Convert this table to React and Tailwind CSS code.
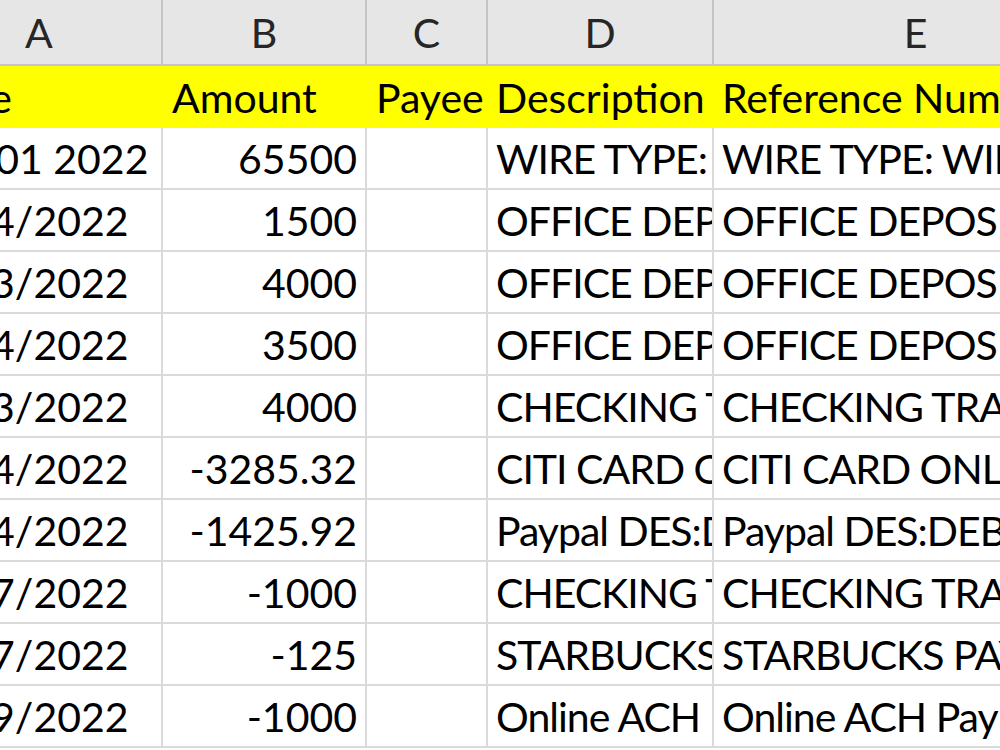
import React from "react";

const COLS = ["A", "B", "C", "D", "E"];

const ROWS = [
  { date: "Jan 01 2022", amount: "65500", desc: "WIRE TYPE: WIRE IN", ref: "WIRE TYPE: WIRE IN DATE: 220101" },
  { date: "1/14/2022", amount: "1500", desc: "OFFICE DEPOSIT", ref: "OFFICE DEPOSIT" },
  { date: "1/13/2022", amount: "4000", desc: "OFFICE DEPOSIT", ref: "OFFICE DEPOSIT" },
  { date: "1/14/2022", amount: "3500", desc: "OFFICE DEPOSIT", ref: "OFFICE DEPOSIT" },
  { date: "1/23/2022", amount: "4000", desc: "CHECKING TRANSFER", ref: "CHECKING TRANSFER" },
  { date: "1/24/2022", amount: "-3285.32", desc: "CITI CARD ONLINE", ref: "CITI CARD ONLINE PAYMENT" },
  { date: "1/24/2022", amount: "-1425.92", desc: "Paypal DES:DEBIT", ref: "Paypal DES:DEBIT" },
  { date: "1/27/2022", amount: "-1000", desc: "CHECKING TRANSFER", ref: "CHECKING TRANSFER" },
  { date: "1/27/2022", amount: "-125", desc: "STARBUCKS PAYMENT", ref: "STARBUCKS PAYMENT" },
  { date: "1/29/2022", amount: "-1000", desc: "Online ACH Payment", ref: "Online ACH Payment" },
];

function Cell({ children, right, last, tight }) {
  return (
    <div
      className={
        "h-[62px] flex items-center overflow-hidden whitespace-nowrap border-b-2 border-[#dadada] " +
        (last ? "" : "border-r-2 ") +
        (tight ? "tracking-[-1px] " : "") +
        (right ? "justify-end pr-[8px]" : "pl-[8px]")
      }
    >
      {children}
    </div>
  );
}

export default function App() {
  return (
    <div
      className="w-[1000px] h-[750px] overflow-hidden bg-white text-black text-[41px] leading-none"
      style={{ fontFamily: "Lato, 'Noto Sans', sans-serif" }}
    >
      <div className="ml-[-83px] w-[1200px] grid grid-cols-[246px_204px_121px_226px_403px]">
        {COLS.map((c, i) => (
          <div
            key={c}
            className={
              "h-[66px] flex items-center justify-center bg-[#e6e6e6] text-[#262626] border-b-2 border-[#c4c4c4] " +
              (i < COLS.length - 1 ? "border-r-2" : "")
            }
          >
            {c}
          </div>
        ))}

        <div className="h-[62px] bg-[#ffff00] flex items-center pl-[8px] overflow-hidden whitespace-nowrap">Date</div>
        <div className="h-[62px] bg-[#ffff00] flex items-center pl-[9px] overflow-hidden whitespace-nowrap">Amount</div>
        <div className="h-[62px] bg-[#ffff00] flex items-center pl-[9px] overflow-hidden whitespace-nowrap">Payee</div>
        <div className="h-[62px] bg-[#ffff00] flex items-center pl-[8px] overflow-hidden whitespace-nowrap">Description</div>
        <div className="h-[62px] bg-[#ffff00] flex items-center pl-[8px] overflow-hidden whitespace-nowrap">Reference Number</div>

        {ROWS.map((r, i) => (
          <React.Fragment key={i}>
            <Cell>{r.date}</Cell>
            <Cell right>{r.amount}</Cell>
            <Cell></Cell>
            <Cell tight>{r.desc}</Cell>
            <Cell tight last>{r.ref}</Cell>
          </React.Fragment>
        ))}
      </div>
    </div>
  );
}
